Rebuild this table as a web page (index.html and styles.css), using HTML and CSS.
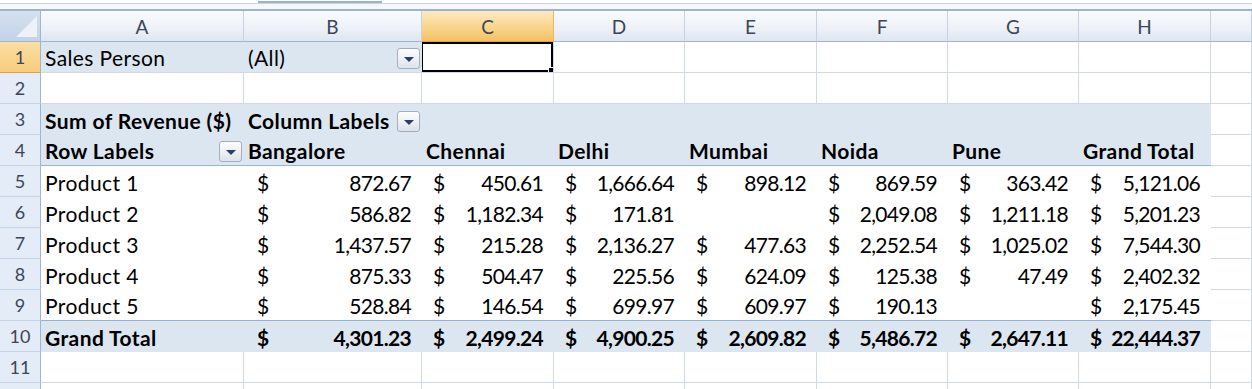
FILE: index.html
```html
<!DOCTYPE html>
<html>
<head>
<meta charset="utf-8">
<link rel="stylesheet" href="styles.css">
</head>
<body>
<div class="topbar"><span class="tab"></span></div>
<table class="sheet">
  <colgroup>
    <col class="w-rh"><col class="w-a"><col class="w-b"><col class="w-c"><col class="w-d"><col class="w-e"><col class="w-f"><col class="w-g"><col class="w-h"><col>
  </colgroup>
  <thead>
    <tr>
      <th class="corner"><span class="tri"></span></th>
      <th class="ch">A</th><th class="ch">B</th><th class="ch hot">C</th><th class="ch">D</th><th class="ch">E</th><th class="ch">F</th><th class="ch">G</th><th class="ch">H</th><th class="ch"></th>
    </tr>
  </thead>
  <tbody>
    <tr>
      <th class="rh hot">1</th>
      <td class="pf">Sales Person</td>
      <td class="pf"><div class="cell"><span>(All)</span><span class="dd"><i></i></span></div></td>
      <td class="grid active"><span class="selbox"><span class="handle"></span></span></td>
      <td class="grid"></td><td class="grid"></td><td class="grid"></td><td class="grid"></td><td class="grid"></td><td class="grid"></td>
    </tr>
    <tr>
      <th class="rh">2</th>
      <td class="grid"></td><td class="grid"></td><td class="grid"></td><td class="grid"></td><td class="grid"></td><td class="grid"></td><td class="grid"></td><td class="grid"></td><td class="grid"></td>
    </tr>
    <tr class="hdr">
      <th class="rh">3</th>
      <td class="b">Sum of Revenue ($)</td>
      <td class="b"><div class="cell"><span>Column Labels</span><span class="dd"><i></i></span></div></td>
      <td></td><td></td><td></td><td></td><td></td><td></td>
      <td class="grid"></td>
    </tr>
    <tr class="hdr sep">
      <th class="rh">4</th>
      <td class="b"><div class="cell"><span>Row Labels</span><span class="dd"><i></i></span></div></td>
      <td class="b">Bangalore</td><td class="b">Chennai</td><td class="b">Delhi</td><td class="b">Mumbai</td><td class="b">Noida</td><td class="b">Pune</td><td class="b">Grand Total</td>
      <td class="grid"></td>
    </tr>
    <tr>
      <th class="rh">5</th>
      <td>Product 1</td>
      <td class="acc wide"><div class="cell"><span>$</span><span class="n">872.67</span></div></td>
      <td class="acc"><div class="cell"><span>$</span><span class="n">450.61</span></div></td>
      <td class="acc"><div class="cell"><span>$</span><span class="n">1,666.64</span></div></td>
      <td class="acc"><div class="cell"><span>$</span><span class="n">898.12</span></div></td>
      <td class="acc"><div class="cell"><span>$</span><span class="n">869.59</span></div></td>
      <td class="acc"><div class="cell"><span>$</span><span class="n">363.42</span></div></td>
      <td class="acc"><div class="cell"><span>$</span><span class="n">5,121.06</span></div></td>
      <td class="grid"></td>
    </tr>
    <tr>
      <th class="rh">6</th>
      <td>Product 2</td>
      <td class="acc wide"><div class="cell"><span>$</span><span class="n">586.82</span></div></td>
      <td class="acc"><div class="cell"><span>$</span><span class="n">1,182.34</span></div></td>
      <td class="acc"><div class="cell"><span>$</span><span class="n">171.81</span></div></td>
      <td class="acc"></td>
      <td class="acc"><div class="cell"><span>$</span><span class="n">2,049.08</span></div></td>
      <td class="acc"><div class="cell"><span>$</span><span class="n">1,211.18</span></div></td>
      <td class="acc"><div class="cell"><span>$</span><span class="n">5,201.23</span></div></td>
      <td class="grid"></td>
    </tr>
    <tr>
      <th class="rh">7</th>
      <td>Product 3</td>
      <td class="acc wide"><div class="cell"><span>$</span><span class="n">1,437.57</span></div></td>
      <td class="acc"><div class="cell"><span>$</span><span class="n">215.28</span></div></td>
      <td class="acc"><div class="cell"><span>$</span><span class="n">2,136.27</span></div></td>
      <td class="acc"><div class="cell"><span>$</span><span class="n">477.63</span></div></td>
      <td class="acc"><div class="cell"><span>$</span><span class="n">2,252.54</span></div></td>
      <td class="acc"><div class="cell"><span>$</span><span class="n">1,025.02</span></div></td>
      <td class="acc"><div class="cell"><span>$</span><span class="n">7,544.30</span></div></td>
      <td class="grid"></td>
    </tr>
    <tr>
      <th class="rh">8</th>
      <td>Product 4</td>
      <td class="acc wide"><div class="cell"><span>$</span><span class="n">875.33</span></div></td>
      <td class="acc"><div class="cell"><span>$</span><span class="n">504.47</span></div></td>
      <td class="acc"><div class="cell"><span>$</span><span class="n">225.56</span></div></td>
      <td class="acc"><div class="cell"><span>$</span><span class="n">624.09</span></div></td>
      <td class="acc"><div class="cell"><span>$</span><span class="n">125.38</span></div></td>
      <td class="acc"><div class="cell"><span>$</span><span class="n">47.49</span></div></td>
      <td class="acc"><div class="cell"><span>$</span><span class="n">2,402.32</span></div></td>
      <td class="grid"></td>
    </tr>
    <tr class="presep">
      <th class="rh">9</th>
      <td>Product 5</td>
      <td class="acc wide"><div class="cell"><span>$</span><span class="n">528.84</span></div></td>
      <td class="acc"><div class="cell"><span>$</span><span class="n">146.54</span></div></td>
      <td class="acc"><div class="cell"><span>$</span><span class="n">699.97</span></div></td>
      <td class="acc"><div class="cell"><span>$</span><span class="n">609.97</span></div></td>
      <td class="acc"><div class="cell"><span>$</span><span class="n">190.13</span></div></td>
      <td class="acc"></td>
      <td class="acc"><div class="cell"><span>$</span><span class="n">2,175.45</span></div></td>
      <td class="grid"></td>
    </tr>
    <tr class="total">
      <th class="rh">10</th>
      <td class="b">Grand Total</td>
      <td class="acc wide b"><div class="cell"><span>$</span><span class="n">4,301.23</span></div></td>
      <td class="acc b"><div class="cell"><span>$</span><span class="n">2,499.24</span></div></td>
      <td class="acc b"><div class="cell"><span>$</span><span class="n">4,900.25</span></div></td>
      <td class="acc b"><div class="cell"><span>$</span><span class="n">2,609.82</span></div></td>
      <td class="acc b"><div class="cell"><span>$</span><span class="n">5,486.72</span></div></td>
      <td class="acc b"><div class="cell"><span>$</span><span class="n">2,647.11</span></div></td>
      <td class="acc b"><div class="cell"><span>$</span><span class="n">22,444.37</span></div></td>
      <td class="grid"></td>
    </tr>
    <tr>
      <th class="rh">11</th>
      <td class="grid"></td><td class="grid"></td><td class="grid"></td><td class="grid"></td><td class="grid"></td><td class="grid"></td><td class="grid"></td><td class="grid"></td><td class="grid"></td>
    </tr>
    <tr>
      <th class="rh"></th>
      <td class="grid"></td><td class="grid"></td><td class="grid"></td><td class="grid"></td><td class="grid"></td><td class="grid"></td><td class="grid"></td><td class="grid"></td><td class="grid"></td>
    </tr>
  </tbody>
</table>
</body>
</html>
```
FILE: styles.css
```css
html, body {
  margin: 0;
  padding: 0;
  background: #ffffff;
  overflow: hidden;
}
body {
  width: 1252px;
  height: 389px;
  font-family: Lato, "Liberation Sans", sans-serif;
  color: #000;
}

/* formula-bar edge above the sheet */
.topbar {
  height: 11px;
  box-sizing: border-box;
  border-bottom: 2px solid #9fb3cd;
  background: linear-gradient(to bottom, #ffffff 0, #ffffff 3px, #c6d3e4 3px, #c6d3e4 4px, #f6f8fb 4px, #f6f8fb 100%);
  display: flex;
}
.tab {
  margin-left: 258px;
  margin-top: 1px;
  width: 124px;
  height: 2px;
  background: #9fb2cb;
}

.sheet {
  width: 1252px;
  table-layout: fixed;
  border-collapse: separate;
  border-spacing: 0;
  font-size: 21px;
}
.w-rh { width: 41px; }
.w-a { width: 203px; }
.w-b { width: 178px; }
.w-c { width: 132px; }
.w-d { width: 131px; }
.w-e { width: 132px; }
.w-f { width: 131px; }
.w-g { width: 131px; }
.w-h { width: 132px; }

.sheet th, .sheet td {
  box-sizing: border-box;
  height: 31px;
  padding: 0;
  overflow: hidden;
  white-space: nowrap;
}

/* column headers */
.ch {
  background: linear-gradient(to bottom, #f8fafd 0%, #eef2f8 55%, #dfe6f0 100%);
  border-right: 1px solid #c6d2e2;
  border-bottom: 1px solid #9eb6ce;
  font-weight: normal;
  font-size: 19px;
  color: #3a4658;
  text-align: center;
  vertical-align: middle;
  line-height: 22px;
  padding-top: 2px !important;
}
.ch.hot {
  background: linear-gradient(to bottom, #fde9c2 0%, #f9d58c 55%, #f4c063 100%);
  border-bottom-color: #e5a040;
  border-right-color: #e9b35f;
}
.corner {
  position: relative;
  background: linear-gradient(to bottom, #d4e0ef, #c3d3e8);
  border-right: 1px solid #9eb6ce;
  border-bottom: 1px solid #9eb6ce;
}
.tri {
  position: absolute;
  right: 3px;
  bottom: 4px;
  width: 0;
  height: 0;
  border-left: 21px solid transparent;
  border-bottom: 21px solid #eef2f8;
}

/* row headers */
.rh {
  background: #e4ecf7;
  border-right: 1px solid #9eb6ce;
  border-bottom: 1px solid #c5d3e5;
  font-weight: normal;
  font-size: 18px;
  color: #3a4658;
  text-align: center;
  vertical-align: bottom;
  line-height: 22px;
  padding-bottom: 4px !important;
}
.rh.hot {
  background: linear-gradient(to bottom, #fbdfa6, #f7cb7a);
  border-bottom-color: #e5a040;
}

/* body cells */
.sheet td {
  vertical-align: bottom;
  line-height: 24px;
  padding: 0 3px 2px 4px;
  letter-spacing: 0.4px;
}
.grid {
  border-right: 1px solid #d0d7e5;
  border-bottom: 1px solid #d0d7e5;
}
.pf {
  background: #dce6f1;
  border-bottom: 1px solid #d0d7e5;
}
.hdr td:not(.grid) {
  background: #dce6f1;
}
.sep td:not(.grid) {
  border-bottom: 1px solid #95b3d7;
}
.presep td:not(.grid) {
  border-bottom: 1px solid #95b3d7;
}
.total td:not(.grid) {
  background: #dce6f1;
}
.b {
  font-weight: bold;
}

.cell {
  display: flex;
  justify-content: space-between;
  align-items: flex-end;
  gap: 6px;
}
.sheet td.acc {
  padding: 0 11px 2px 11px;
}
.sheet td.acc.wide {
  padding-left: 13px;
}
.n {
  letter-spacing: -0.7px;
}

/* pivot filter dropdown button */
.dd {
  flex: none;
  width: 23px;
  height: 21px;
  box-sizing: border-box;
  margin-right: -1px;
  margin-bottom: 1px;
  border: 1px solid #a3afc0;
  border-radius: 3px;
  background: linear-gradient(to bottom, #fdfdfe 0%, #eef1f5 50%, #dde3ea 100%);
  display: flex;
  align-items: center;
  justify-content: center;
}
.dd i {
  display: block;
  width: 0;
  height: 0;
  margin-top: 1px;
  border-left: 5px solid transparent;
  border-right: 5px solid transparent;
  border-top: 5px solid #2b3c6e;
}

/* active cell */
.active {
  position: relative;
}
.selbox {
  position: absolute;
  left: -2px;
  top: -1px;
  right: -1px;
  bottom: -1px;
  border: 3px solid #000;
}
.handle {
  position: absolute;
  right: -6px;
  bottom: -6px;
  width: 7px;
  height: 7px;
  background: #000;
  border: 1px solid #fff;
}
```
